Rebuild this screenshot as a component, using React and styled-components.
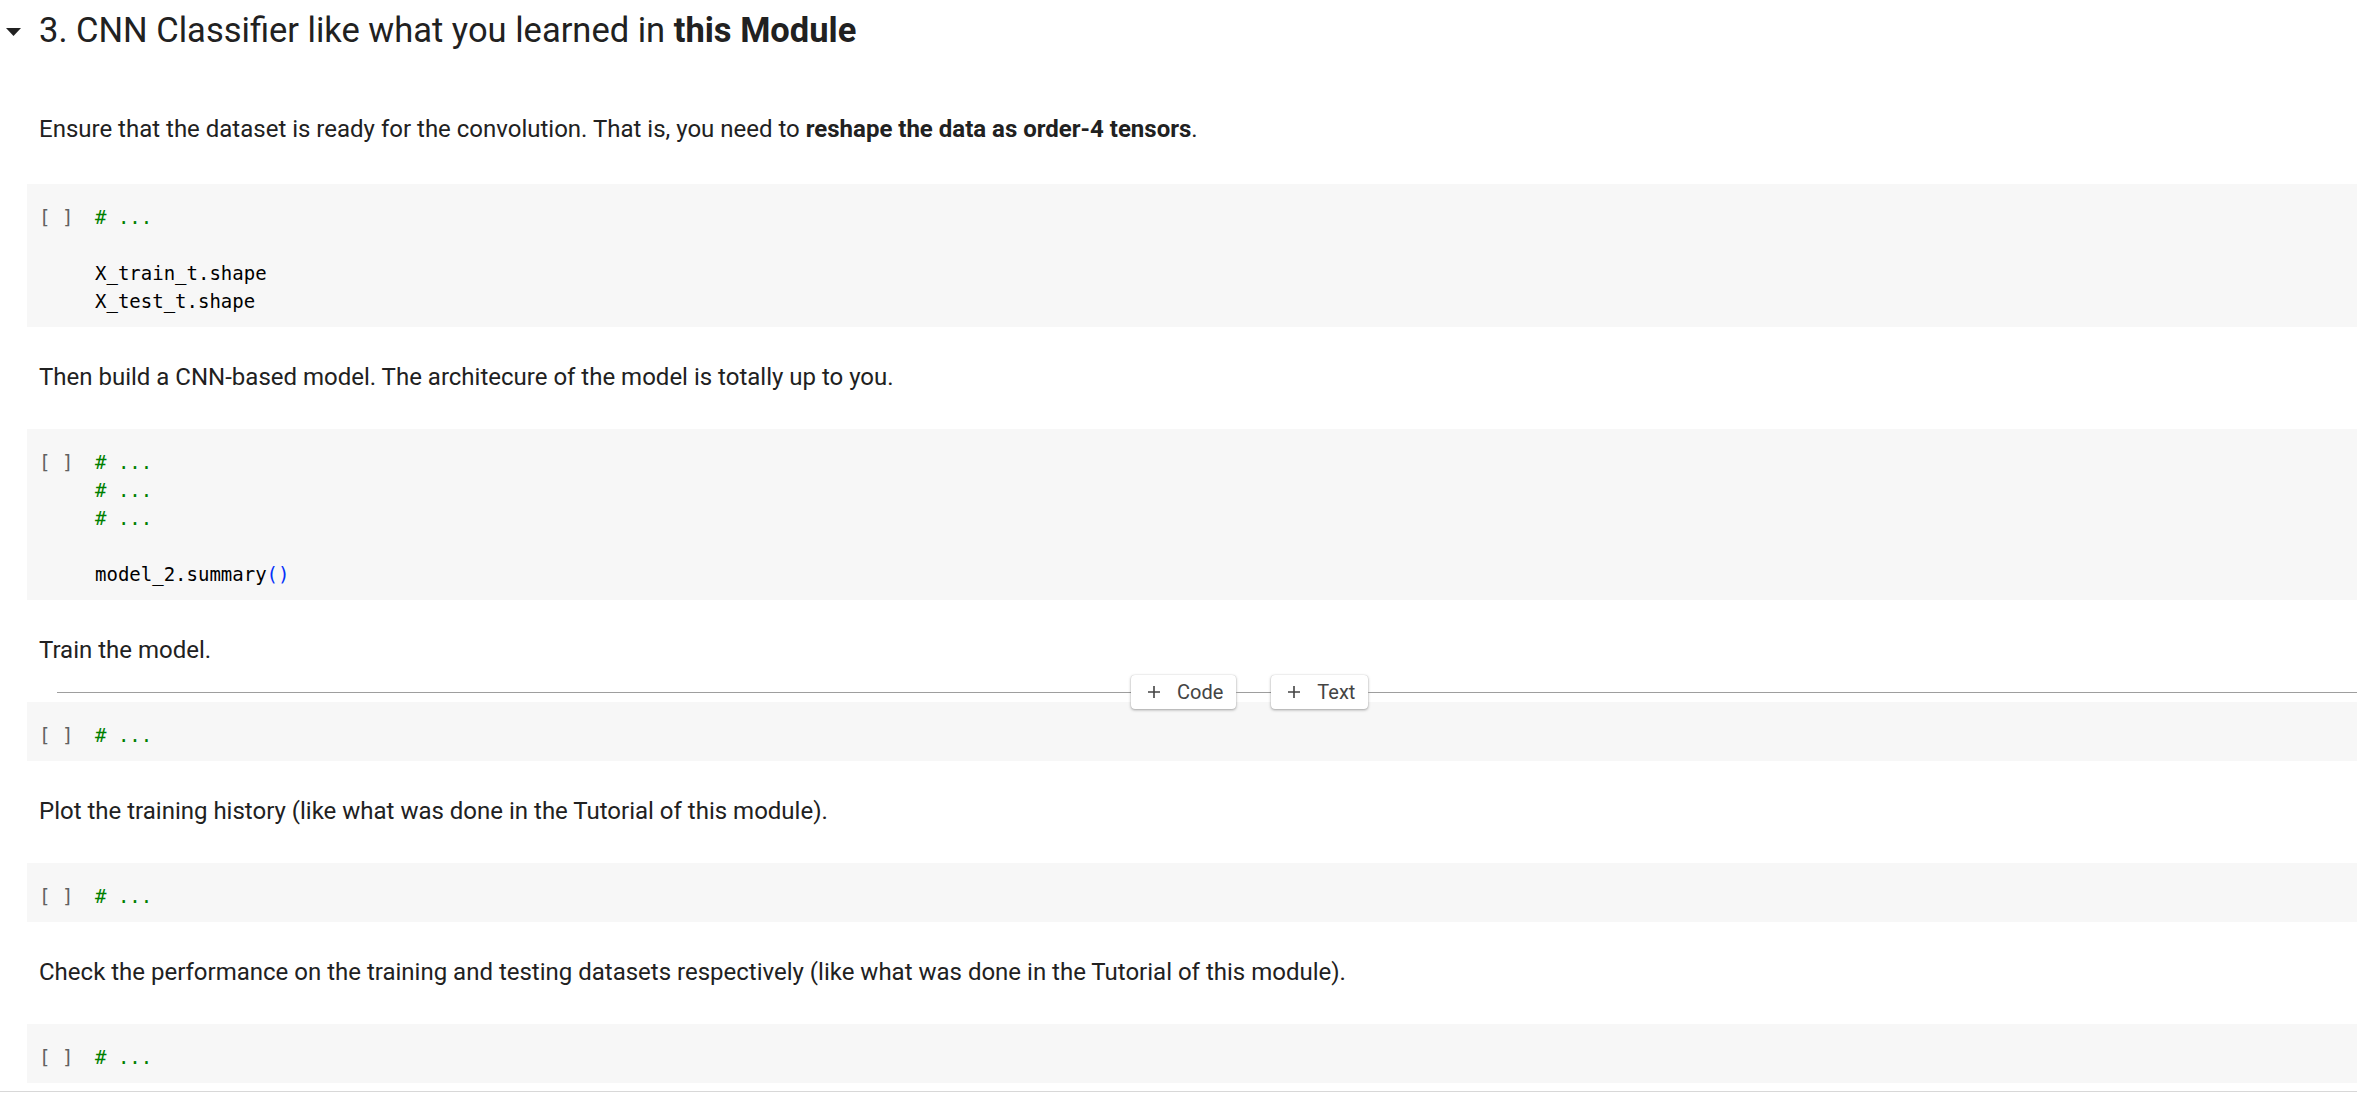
import styled, { createGlobalStyle } from "styled-components";

const GlobalStyle = createGlobalStyle`
  html, body {
    margin: 0;
    padding: 0;
    background: #ffffff;
  }
  body {
    font-family: Roboto, "Noto Sans", "Liberation Sans", sans-serif;
    color: #212121;
    overflow: hidden;
  }
`;

const Notebook = styled.main`
  width: 2357px;
  display: flex;
  flex-direction: column;
`;

const SectionHeader = styled.div`
  display: flex;
  align-items: center;
  padding: 8px 0 30px 6px;
`;

const Caret = styled.svg`
  width: 15px;
  height: 8px;
  margin: 3px 18px 0 0;
  flex: none;
  fill: #212121;
`;

const Title = styled.h2`
  margin: 0;
  font-size: 34.5px;
  line-height: 44px;
  font-weight: 400;
  color: #212121;

  b {
    font-weight: 700;
  }
`;

const TextCell = styled.div`
  position: relative;
  padding: ${(p) => (p.$first ? "31px 0 39px 39px" : "34px 0 36px 39px")};
  font-size: 24px;
  line-height: 32px;
  color: #212121;

  b {
    font-weight: 700;
  }
`;

const CodeCell = styled.div`
  margin-left: 27px;
  background: #f7f7f7;
  display: flex;
  padding: 19px 0 12px 12px;
  font-family: "DejaVu Sans Mono", "Liberation Mono", monospace;
  font-size: 19px;
  line-height: 28px;
`;

const Gutter = styled.div`
  width: 56px;
  flex: none;
  color: #616161;
  white-space: pre;
`;

const CodeBody = styled.div`
  display: flex;
  flex-direction: column;
  color: #000000;
`;

const CodeLine = styled.div`
  height: 28px;
  white-space: pre;
`;

const Comment = styled.span`
  color: #008000;
`;

const Paren = styled.span`
  color: #0431fa;
`;

const AddCellBar = styled.div`
  position: absolute;
  left: 57px;
  right: 0;
  bottom: -7px;
  height: 34px;
  display: flex;
  align-items: center;
  z-index: 2;
`;

const Rule = styled.div`
  height: 1px;
  background: #9e9e9e;
  flex: ${(p) => (p.$grow ? "1" : "none")};
  width: ${(p) => (p.$width ? `${p.$width}px` : "auto")};
`;

const AddButton = styled.button`
  flex: none;
  display: flex;
  align-items: center;
  gap: 17px;
  height: 34px;
  padding: 0 13px 0 17px;
  border: none;
  border-radius: 4px;
  background: #ffffff;
  box-shadow: 0 1px 3px rgba(0, 0, 0, 0.35), 0 0 1px rgba(0, 0, 0, 0.2);
  font-family: Roboto, "Noto Sans", sans-serif;
  font-size: 20px;
  color: #444444;
  cursor: pointer;
`;

const Plus = styled.svg`
  width: 12px;
  height: 12px;
  stroke: #444444;
  stroke-width: 1.6;
`;

const BottomRule = styled.div`
  margin-top: 8px;
  height: 1px;
  background: #d8d8d8;
`;

const PlusIcon = () => (
  <Plus viewBox="0 0 12 12">
    <path d="M6 0V12M0 6H12" fill="none" />
  </Plus>
);

const Cell = ({ lines }) => (
  <CodeCell>
    <Gutter>[ ]</Gutter>
    <CodeBody>
      {lines.map((line, i) => (
        <CodeLine key={i}>{line}</CodeLine>
      ))}
    </CodeBody>
  </CodeCell>
);

const dots = <Comment># ...</Comment>;

export default function App() {
  return (
    <>
      <GlobalStyle />
      <Notebook>
        <SectionHeader>
          <Caret viewBox="0 0 15 8">
            <path d="M0 0H15L7.5 8Z" />
          </Caret>
          <Title>
            3. CNN Classifier like what you learned in <b>this Module</b>
          </Title>
        </SectionHeader>

        <TextCell $first>
          Ensure that the dataset is ready for the convolution. That is, you
          need to <b>reshape the data as order-4 tensors</b>.
        </TextCell>
        <Cell lines={[dots, "", "X_train_t.shape", "X_test_t.shape"]} />

        <TextCell>
          Then build a CNN-based model. The architecure of the model is totally
          up to you.
        </TextCell>
        <Cell
          lines={[
            dots,
            dots,
            dots,
            "",
            <>
              model_2.summary<Paren>()</Paren>
            </>,
          ]}
        />

        <TextCell>
          Train the model.
          <AddCellBar>
            <Rule $width={1074} />
            <AddButton>
              <PlusIcon />
              Code
            </AddButton>
            <Rule $width={35} />
            <AddButton>
              <PlusIcon />
              Text
            </AddButton>
            <Rule $grow />
          </AddCellBar>
        </TextCell>
        <Cell lines={[dots]} />

        <TextCell>
          Plot the training history (like what was done in the Tutorial of this
          module).
        </TextCell>
        <Cell lines={[dots]} />

        <TextCell>
          Check the performance on the training and testing datasets
          respectively (like what was done in the Tutorial of this module).
        </TextCell>
        <Cell lines={[dots]} />

        <BottomRule />
      </Notebook>
    </>
  );
}
